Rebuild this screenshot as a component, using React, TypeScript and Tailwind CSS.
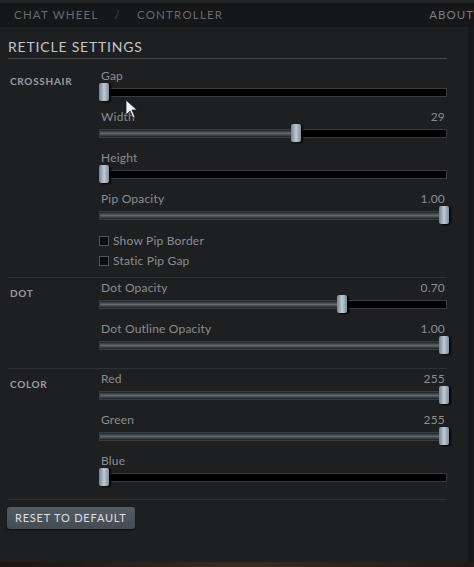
import React from "react";

type SliderProps = {
    label: string;
    value?: string;
    pct: number;
};

function Slider({ label, value, pct }: SliderProps) {
    return (
        <div className="mb-[9px]">
            <div className="flex h-[14px] items-center justify-between px-[2px] text-[12px] leading-none tracking-[0.2px] text-[#8b8e91]">
                <span>{label}</span>
                {value && <span>{value}</span>}
            </div>
            <div className="relative flex h-[18px] items-center">
                <div className="relative h-[9px] w-full border border-[#3a3d40] bg-black">
                    <div
                        className="absolute inset-y-0 left-0 border-y border-[#262a2d] bg-gradient-to-b from-[#33383b] via-[#5e686e] to-[#2e3337]"
                        style={{ width: `${pct * 100}%` }}
                    />
                </div>
                <div
                    className="absolute top-0 h-[18px] w-[10px] rounded-[2px] bg-gradient-to-r from-[#74828f] via-[#bfcbd7] to-[#7f8c99] shadow-[2px_1px_2px_rgba(0,0,0,0.9)]"
                    style={{ left: `${pct * 340}px` }}
                />
            </div>
        </div>
    );
}

function Checkbox({ label }: { label: string }) {
    return (
        <div className="flex h-[20px] items-center gap-[4px] text-[12px] tracking-[0.2px] text-[#8b8e91]">
            <div className="h-[10px] w-[10px] border border-[#505356] bg-[#0c0d0e]" />
            <span>{label}</span>
        </div>
    );
}

function Section({ title, children, className }: { title: string; children: React.ReactNode; className?: string }) {
    return (
        <div className={"flex " + (className ?? "")}>
            <div className="w-[91px] shrink-0 pl-[2px] pt-[7px] text-[10px] font-bold leading-none tracking-[0.7px] text-[#9a9da0]">
                {title}
            </div>
            <div className="w-[348px]">{children}</div>
        </div>
    );
}

export default function App() {
    return (
        <div
            className="relative flex h-[567px] w-[474px] flex-col overflow-hidden bg-[#1e1f21]"
            style={{ fontFamily: "Lato, 'Open Sans', sans-serif" }}
        >
            {/* Top nav */}
            <div className="flex h-[27px] shrink-0 items-center justify-between border-t-[3px] border-[#232527] bg-[#161719] pl-[14px] text-[11.5px] tracking-[1.2px] text-[#686b6e]">
                <div className="flex items-center gap-[16px]">
                    <span>CHAT WHEEL</span>
                    <span className="text-[#45484b]">/</span>
                    <span>CONTROLLER</span>
                </div>
                <span className="text-[#7a7d80] tracking-[1px]">ABOUT</span>
            </div>

            <div className="flex flex-1">
                <div className="w-[468px] px-[8px]">
                    {/* Title */}
                    <div className="mt-[11px] w-[439px] border-b border-[#46484b] pb-[3px] text-[14px] leading-[17px] tracking-[0.8px] text-[#c4c6c8]">
                        RETICLE SETTINGS
                    </div>

                    <Section title="CROSSHAIR" className="pt-[10px]">
                        <Slider label="Gap" pct={0} />
                        <Slider label="Width" value="29" pct={0.565} />
                        <Slider label="Height" pct={0} />
                        <Slider label="Pip Opacity" value="1.00" pct={1} />
                        <div className="-mt-[2px] pb-[6px]">
                            <Checkbox label="Show Pip Border" />
                            <Checkbox label="Static Pip Gap" />
                        </div>
                    </Section>

                    <div className="w-[439px] border-t border-[#2f3134]" />

                    <Section title="DOT" className="pt-[3px]">
                        <Slider label="Dot Opacity" value="0.70" pct={0.7} />
                        <Slider label="Dot Outline Opacity" value="1.00" pct={1} />
                        <div className="h-[5px]" />
                    </Section>

                    <div className="w-[439px] border-t border-[#2f3134]" />

                    <Section title="COLOR" className="pt-[3px]">
                        <Slider label="Red" value="255" pct={1} />
                        <Slider label="Green" value="255" pct={1} />
                        <Slider label="Blue" pct={0} />
                        <div className="h-[4px]" />
                    </Section>

                    <div className="w-[439px] border-t border-[#2f3134]" />

                    <button className="ml-[-1px] mt-[7px] h-[22px] rounded-[3px] bg-gradient-to-b from-[#545c64] to-[#444b52] px-[8px] text-[11px] tracking-[0.8px] text-[#dcdfe2] shadow-[0_1px_2px_rgba(0,0,0,0.6)]">
                        RESET TO DEFAULT
                    </button>
                </div>
                <div className="flex-1 bg-[#17181a]" />
            </div>

            {/* bottom strip of background art */}
            <div className="h-[5px] shrink-0 bg-gradient-to-r from-[#1a1412] via-[#3a2a22] to-[#231a16]" />

            {/* mouse cursor */}
            <svg className="absolute left-[125px] top-[99px]" width="14" height="20" viewBox="0 0 14 20">
                <path d="M1 1 L1 16 L5 12 L8 19 L10 18 L7 11 L12 11 Z" fill="#f4f4f4" stroke="#222" strokeWidth="0.8" />
            </svg>
        </div>
    );
}
